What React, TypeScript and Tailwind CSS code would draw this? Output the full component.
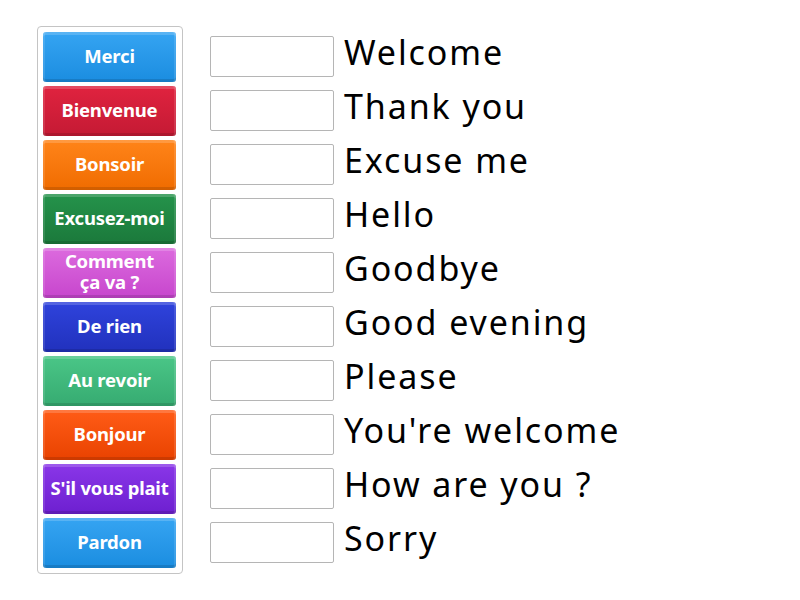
import React from "react";

const buttons: { label: React.ReactNode; cls: string }[] = [
  { label: "Merci", cls: "bg-gradient-to-b from-[#35a4f2] to-[#1a8de0]" },
  { label: "Bienvenue", cls: "bg-gradient-to-b from-[#e0233f] to-[#c41a34]" },
  { label: "Bonsoir", cls: "bg-gradient-to-b from-[#ff8418] to-[#f06c00]" },
  { label: "Excusez-moi", cls: "bg-gradient-to-b from-[#25934b] to-[#1b793b]" },
  { label: (<>Comment<br />ça va ?</>), cls: "bg-gradient-to-b from-[#dc6ade] to-[#c745cd]" },
  { label: "De rien", cls: "bg-gradient-to-b from-[#2f43dc] to-[#2131bd]" },
  { label: "Au revoir", cls: "bg-gradient-to-b from-[#4ac687] to-[#36ab71]" },
  { label: "Bonjour", cls: "bg-gradient-to-b from-[#ff5c16] to-[#e94200]" },
  { label: "S'il vous plait", cls: "bg-gradient-to-b from-[#8a36e8] to-[#6d1fd0]" },
  { label: "Pardon", cls: "bg-gradient-to-b from-[#35a4f2] to-[#1a8de0]" },
];

const words = [
  "Welcome",
  "Thank you",
  "Excuse me",
  "Hello",
  "Goodbye",
  "Good evening",
  "Please",
  "You're welcome",
  "How are you ?",
  "Sorry",
];

export default function App() {
  return (
    <div
      className="w-[800px] h-[600px] bg-white flex items-start pt-[26px] pl-[37px]"
      style={{ fontFamily: '"Noto Sans", "Open Sans", sans-serif' }}
    >
      <div className="w-[146px] border border-[#c4c4c4] rounded-[4px] pt-[5px] pb-[5px] pl-[5px] pr-[6px] flex flex-col gap-[4px]">
        {buttons.map((b, i) => (
          <div
            key={i}
            className={`h-[50px] w-[133px] rounded-[3px] flex items-center justify-center pb-[4px] text-center text-white font-bold text-[18.5px] leading-[21px] tracking-[-0.2px] shadow-[inset_0_3px_0_rgba(255,255,255,0.18),inset_2px_0_0_rgba(255,255,255,0.12),inset_-2px_0_0_rgba(255,255,255,0.12),inset_0_-3px_0_rgba(0,0,0,0.12)] ${b.cls}`}
          >
            <span>{b.label}</span>
          </div>
        ))}
      </div>
      <div className="ml-[27px] mt-[10px] flex flex-col gap-[13px]">
        {words.map((w, i) => (
          <div key={i} className="flex items-start h-[41px]">
            <div className="w-[124px] h-[41px] border border-[#b5b5b5] rounded-[2px] bg-white shrink-0" />
            <div className="ml-[10px] -mt-[4px] text-[34px] leading-[41px] tracking-[1.9px] text-black whitespace-nowrap">
              {w}
            </div>
          </div>
        ))}
      </div>
    </div>
  );
}
